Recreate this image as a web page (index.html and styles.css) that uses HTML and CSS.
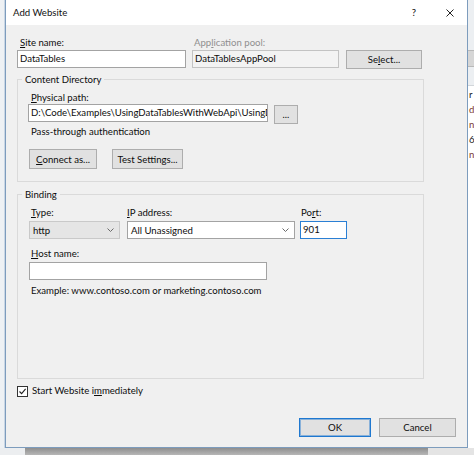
FILE: index.html
```html
<!DOCTYPE html>
<html>
<head>
<meta charset="utf-8">
<link rel="stylesheet" href="styles.css">
</head>
<body>
<div class="screen">
  <div class="top">
    <div class="side-left"></div>
    <div class="dialog">
      <div class="titlebar">
        <span class="title">Add Website</span>
        <span class="help">?</span>
        <svg class="close" viewBox="0 0 8 8" width="8" height="8"><path d="M0.5 0.5 L7.5 7.5 M7.5 0.5 L0.5 7.5" stroke="#222" stroke-width="1" fill="none"/></svg>
      </div>
      <div class="body">
        <div class="row1">
          <div class="field site">
            <span class="lbl"><u>S</u>ite name:</span>
            <div class="input">DataTables</div>
          </div>
          <div class="field pool">
            <span class="lbl dim">App<u>l</u>ication pool:</span>
            <div class="input disabled">DataTablesAppPool</div>
          </div>
          <button class="btn btn-select">Se<u>l</u>ect...</button>
        </div>

        <fieldset class="group g1">
          <legend>Content Directory</legend>
          <div class="gbody">
            <span class="lbl"><u>P</u>hysical path:</span>
            <div class="path-row">
              <div class="input path">D:\Code\Examples\UsingDataTablesWithWebApi\UsingD</div>
              <button class="btn btn-browse">...</button>
            </div>
            <div class="plain pass">Pass-through authentication</div>
            <div class="btn-row">
              <button class="btn btn-connect"><u>C</u>onnect as...</button>
              <button class="btn btn-test">Test Settings...</button>
            </div>
          </div>
        </fieldset>

        <fieldset class="group g2">
          <legend>Binding</legend>
          <div class="gbody">
            <div class="bind-row">
              <div class="field type">
                <span class="lbl"><u>T</u>ype:</span>
                <div class="combo combo-type"><span class="combo-text">http</span><svg class="chev" viewBox="0 0 7 4" width="7" height="4"><path d="M0.5 0.5 L3.5 3.5 L6.5 0.5" stroke="#6a6a6a" fill="none"/></svg></div>
              </div>
              <div class="field ip">
                <span class="lbl"><u>I</u>P address:</span>
                <div class="combo combo-ip"><span class="combo-text">All Unassigned</span><svg class="chev" viewBox="0 0 7 4" width="7" height="4"><path d="M0.5 0.5 L3.5 3.5 L6.5 0.5" stroke="#6a6a6a" fill="none"/></svg></div>
              </div>
              <div class="field port">
                <span class="lbl">Po<u>r</u>t:</span>
                <div class="input focus">901</div>
              </div>
            </div>
            <span class="lbl host-lbl"><u>H</u>ost name:</span>
            <div class="input host"></div>
            <div class="plain example">Example: www.contoso.com or marketing.contoso.com</div>
          </div>
        </fieldset>

        <div class="check-row">
          <span class="checkbox"><svg viewBox="0 0 9 9" width="9" height="9"><path d="M1.5 4.5 L3.6 6.6 L7.6 1.8" stroke="#222" stroke-width="1.1" fill="none"/></svg></span>
          <span class="check-label">Start Website i<u>m</u>mediately</span>
        </div>

        <div class="actions">
          <button class="btn btn-ok">OK</button>
          <button class="btn btn-cancel">Cancel</button>
        </div>
      </div>
    </div>
    <div class="side-right">
      <div class="sr-top"><div class="sr-block"></div></div>
      <div class="sr-text">
        <div class="sr-line">r</div>
        <div class="sr-line red">d</div>
        <div class="sr-line red">n</div>
        <div class="sr-line">6</div>
        <div class="sr-line red">n</div>
      </div>
    </div>
  </div>
  <div class="bottom-strip">
    <div class="bs-left"></div>
    <div class="bs-shadow"></div>
    <div class="bs-right"></div>
  </div>
</div>
</body>
</html>
```

FILE: styles.css
```css
* { box-sizing: border-box; }
html, body { margin: 0; padding: 0; }
body {
  width: 474px;
  height: 455px;
  overflow: hidden;
  font-family: Lato, "Noto Sans", sans-serif;
  font-size: 9.6px;
  color: #0d0d0d;
  background: #e9e9e9;
}
u { text-decoration: underline; text-underline-offset: 1px; }

.screen { display: flex; flex-direction: column; height: 455px; }
.top { display: flex; height: 448px; }

.side-left {
  width: 5px;
  background: #eef1f4;
  border-right: 1px solid #c9d6e4;
}

.dialog {
  width: 463px;
  height: 448px;
  border: 1px solid #7d9cbd;
  border-top: none;
  background: #f0f0f0;
  display: flex;
  flex-direction: column;
}

.titlebar {
  height: 25px;
  flex: none;
  background: #ffffff;
  display: flex;
  align-items: center;
  padding: 0 13px 0 7px;
  line-height: 13px;
  color: #111;
}
.title { flex: 1; }
.help { margin-right: 30px; }
.close { display: block; }

.body {
  flex: 1;
  padding: 11px 11px 0 11px;
  display: flex;
  flex-direction: column;
}

.lbl {
  display: block;
  height: 13px;
  line-height: 13px;
  white-space: nowrap;
  padding-left: 3px;
  margin-bottom: 1px;
}
.lbl.dim { color: #8f8f8f; padding-left: 2px; }

.input {
  height: 18px;
  border: 1px solid #a3a3a3;
  background: #ffffff;
  padding: 0 2px;
  line-height: 15px;
  white-space: nowrap;
  overflow: hidden;
}
.input.disabled { background: #f3f3f3; border-color: #c3c3c3; }
.input.focus { border-color: #2a7fd4; }

.btn {
  font: inherit;
  color: #0d0d0d;
  margin: 0;
  padding: 0;
  background: #e1e1e1;
  border: 1px solid #adadad;
  line-height: 13px;
  display: flex;
  align-items: center;
  justify-content: center;
  white-space: nowrap;
}

.row1 { display: flex; align-items: flex-start; }
.site { width: 169px; }
.pool { width: 147px; margin-left: 6px; }
.btn-select { width: 76px; height: 19px; margin-left: 7px; margin-top: 14px; }

.group {
  margin: 4px 0 0 0;
  padding: 0;
  width: 407px;
  min-width: 0;
  border: 1px solid #dadada;
}
.group legend {
  margin-left: 4px;
  padding: 0 3px;
  line-height: 13px;
  height: 13px;
}
.gbody { padding: 5px 0 12px 10px; }
.g1 .gbody > .lbl { margin-bottom: 0; }

.path-row { display: flex; align-items: flex-start; }
.path { width: 240px; }
.btn-browse { width: 24px; height: 19px; margin: 1px 0 0 6px; }

.plain { line-height: 13px; height: 13px; padding-left: 3px; white-space: nowrap; }
.pass { margin-top: 1px; }

.btn-row { display: flex; margin-top: 11px; padding-left: 1px; }
.btn-connect { width: 68px; height: 20px; }
.btn-test { width: 71px; height: 20px; margin-left: 15px; }

.g2 { margin-top: 6px; }
.g2 .gbody { padding-bottom: 81px; }

.bind-row { display: flex; align-items: flex-start; }
.bind-row .lbl { margin-bottom: 2px; }
.type { width: 91px; margin-left: 1px; }
.type .lbl { padding-left: 2px; }
.ip { width: 168px; margin-left: 7px; }
.ip .lbl { padding-left: 0; }
.port { width: 47px; margin-left: 5px; }
.port .lbl { padding-left: 1px; }

.combo {
  height: 18px;
  display: flex;
  align-items: center;
  padding: 0 5px 0 3px;
  border: 1px solid #a3a3a3;
  background: #ffffff;
}
.combo-type { background: #e5e5e5; border-color: #c9c9c9; }
.combo-text { flex: 1; line-height: 13px; }
.chev { display: block; }

.host-lbl { margin-top: 8px; margin-bottom: 2px; }
.host { width: 238px; margin-left: 1px; }
.example { margin-top: 4px; }

.check-row {
  display: flex;
  align-items: center;
  height: 13px;
  margin-top: 5px;
  line-height: 13px;
}
.checkbox {
  width: 11px;
  height: 11px;
  border: 1px solid #333333;
  background: #ffffff;
  display: flex;
  align-items: center;
  justify-content: center;
  margin-top: 1px;
}
.checkbox svg { display: block; }
.check-label { margin-left: 4px; white-space: nowrap; }

.actions { display: flex; justify-content: flex-end; margin-top: 21px; }
.btn-ok {
  width: 72px;
  height: 19px;
  border-color: #1f78d0;
  box-shadow: inset 0 0 0 1px rgba(31, 120, 208, 0.45);
}
.btn-cancel { width: 77px; height: 19px; margin-left: 8px; }

.side-right {
  width: 6px;
  overflow: hidden;
  background: #ffffff;
  display: flex;
  flex-direction: column;
}
.sr-top {
  height: 86px;
  background: #eceff2;
  border-bottom: 1px solid #d2d6da;
  padding-top: 50px;
}
.sr-block { height: 17px; background: #d6d6d6; border-top: 1px solid #b8b8b8; border-bottom: 1px solid #b8b8b8; }
.sr-text { padding: 1px 0 0 1px; }
.sr-line { line-height: 15px; height: 15px; white-space: nowrap; color: #222; }
.sr-line.red { color: #7a3a2e; }

.bottom-strip { display: flex; height: 7px; }
.bs-left { width: 25px; background: #eceef0; }
.bs-shadow { width: 403px; background: linear-gradient(#8f8f8f, #b6b6b6); }
.bs-right { flex: 1; background: #e4e4e4; }
```
